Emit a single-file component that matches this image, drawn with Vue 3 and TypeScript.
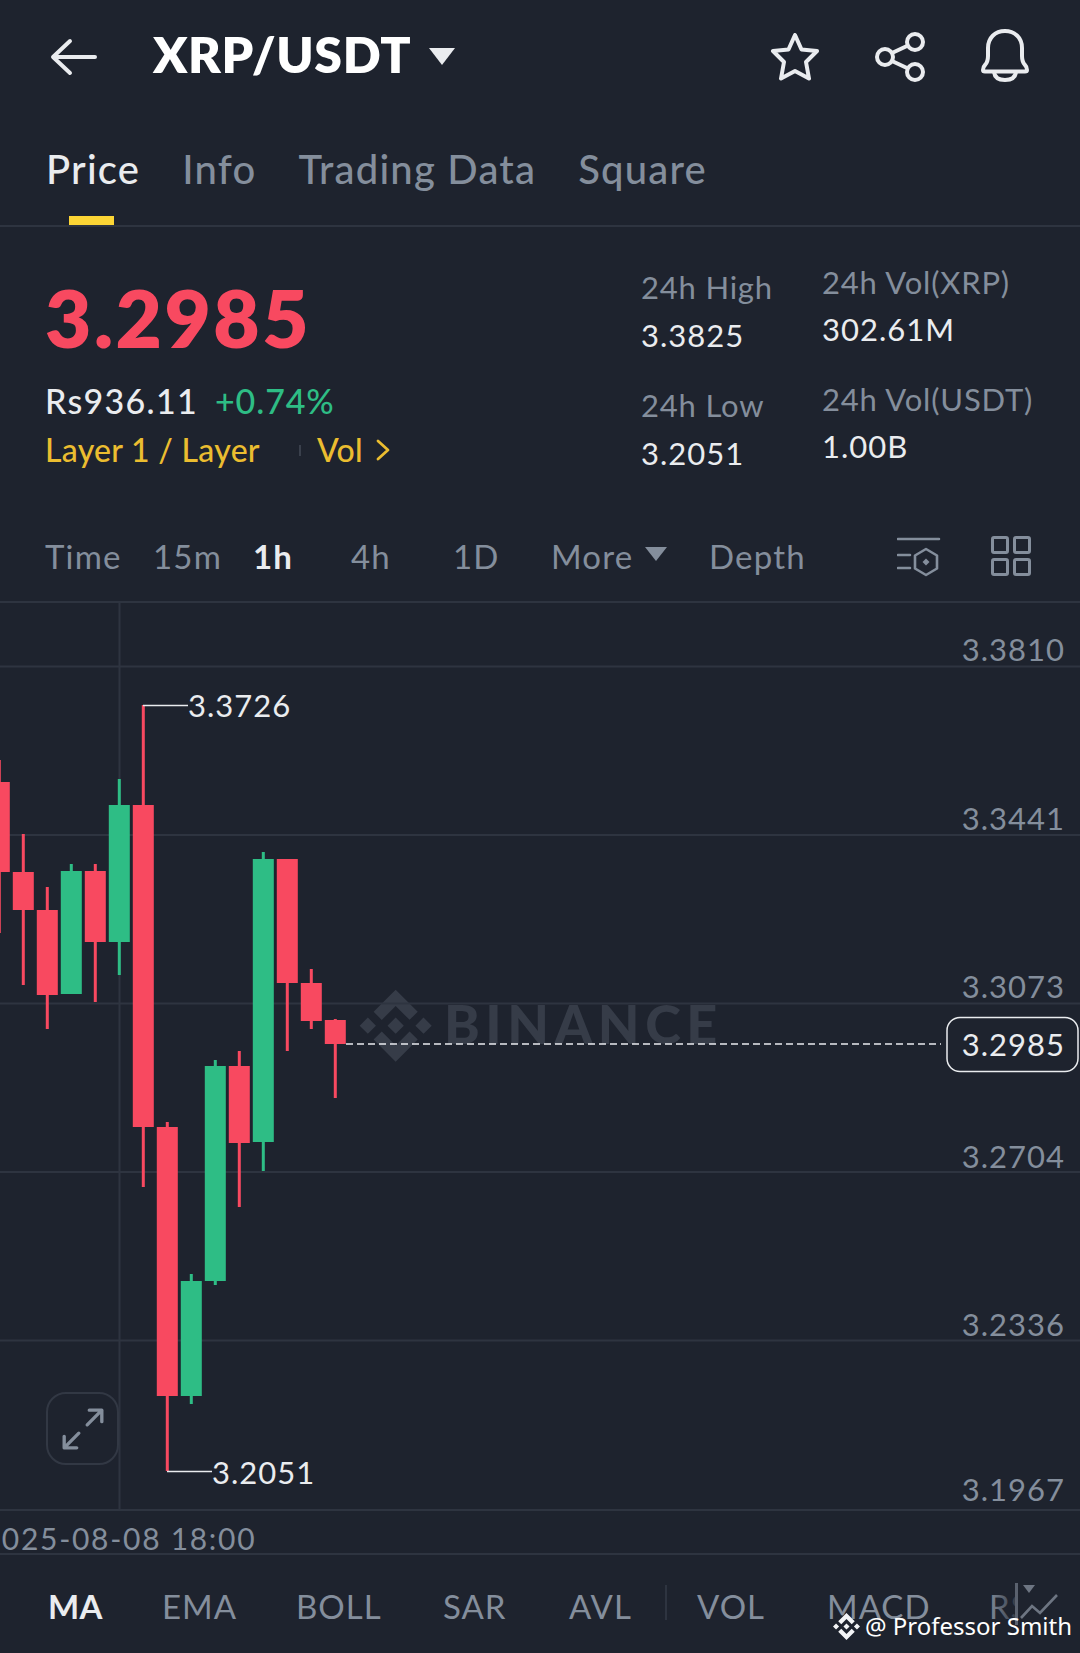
<script setup lang="ts">
interface Candle {
  x: number
  wickTop: number
  wickBottom: number
  top: number
  bottom: number
  up: boolean
}

const tabs = ['Price', 'Info', 'Trading Data', 'Square']
const intervals = ['Time', '15m', '1h', '4h', '1D']
const indicators = ['MA', 'EMA', 'BOLL', 'SAR', 'AVL']
const gridLines = [666.5, 835, 1003.5, 1172, 1340.5, 1510]
const axisLabels = [
  { y: 650, text: '3.3810' },
  { y: 819, text: '3.3441' },
  { y: 987, text: '3.3073' },
  { y: 1157, text: '3.2704' },
  { y: 1325, text: '3.2336' },
  { y: 1490, text: '3.1967' }
]

// x, wick top, wick bottom, body top, body bottom, up
const raw: [number, number, number, number, number, boolean][] = [
  [-0.7, 760, 933, 782, 872, false],
  [23.3, 834, 985, 872, 910, false],
  [47.3, 887, 1029, 910, 995, false],
  [71.3, 864, 994, 871, 994, true],
  [95.3, 864, 1002, 871, 942, false],
  [119.3, 779, 975, 805, 942, true],
  [143.3, 705, 1187, 805, 1127, false],
  [167.3, 1122, 1471, 1127, 1396, false],
  [191.3, 1274, 1404, 1281, 1396, true],
  [215.3, 1060, 1285, 1066, 1281, true],
  [239.3, 1051, 1207, 1066, 1143, false],
  [263.3, 852, 1171, 859, 1142, true],
  [287.3, 859, 1051, 859, 983, false],
  [311.3, 969, 1029, 983, 1021, false],
  [335.3, 1019, 1098, 1020, 1044, false]
]

const candles: Candle[] = raw.map(([x, wickTop, wickBottom, top, bottom, up]) => ({
  x, wickTop, wickBottom, top, bottom, up
}))

const logoPath = 'M16.624 13.9202l2.7175 2.7154-7.353 7.353-7.353-7.352 2.7175-2.7164 4.6355 4.6595 4.6356-4.6595zm4.6366-4.6366L24 12l-2.7154 2.7164L18.5682 12l2.6924-2.7164zm-9.272.001l2.7163 2.6914-2.7164 2.7174v-.001L9.2721 12l2.7164-2.7154zm-9.2722-.001L5.4088 12l-2.6914 2.6924L0 12l2.7164-2.7164zM11.9885.0115l7.353 7.329-2.7174 2.7154-4.6356-4.6356-4.6355 4.6595-2.7174-2.7154 7.353-7.353z'
</script>

<template>
  <div class="page">
    <!-- top bar -->
    <header class="topbar">
      <svg class="back" viewBox="0 0 50 38" fill="none" stroke="currentColor" stroke-width="4" stroke-linecap="round" stroke-linejoin="round">
        <path d="M45 19H4M20 3L3 19l17 16" />
      </svg>
      <h1 class="pair">XRP/USDT</h1>
      <span class="pair-caret"></span>
      <div class="top-actions">
        <svg class="ic-star" viewBox="0 0 50 48" fill="none" stroke="currentColor" stroke-width="4" stroke-linejoin="round">
          <path d="M25 2l6.500 14.500L47 18 36 29l3 16.500L25 38l-14 7.500L14 29 3 18l15.500-1.500z" />
        </svg>
        <svg class="ic-share" viewBox="0 0 50 50" fill="none" stroke="currentColor" stroke-width="4">
          <circle cx="40" cy="10" r="8" />
          <circle cx="10" cy="25" r="8" />
          <circle cx="40" cy="40" r="8" />
          <path d="M17 21l16-7.500M17 29l16 7.500" />
        </svg>
        <svg class="ic-bell" viewBox="0 0 50 54" fill="none" stroke="currentColor" stroke-width="4" stroke-linejoin="round">
          <path d="M3 41q0-3 2-5 3-3 3-9v-8C8 9 15 2 25 2s17 7 17 17v8q0 6 3 9 2 2 2 5 0 1.500-2 1.500H5q-2 0-2-1.500z" />
          <path d="M14 43q1 8 11 8t11-8" />
        </svg>
      </div>
    </header>

    <!-- tabs -->
    <nav class="tabs">
      <span v-for="(tab, i) in tabs" :key="tab" class="tab" :class="{ active: i === 0 }">{{ tab }}</span>
      <span class="tab-bar"></span>
    </nav>

    <!-- price summary -->
    <section class="summary">
      <div class="summary-left">
        <div class="last-price">3.2985</div>
        <div class="fiat-row">
          <span class="fiat">Rs936.11</span>
          <span class="change">+0.74%</span>
        </div>
        <div class="tag-row">
          <span>Layer 1 / Layer</span>
          <i class="tag-sep"></i>
          <span>Vol</span>
          <svg class="tag-chevron" viewBox="0 0 14 22" fill="none" stroke="currentColor" stroke-width="2.800" stroke-linecap="round" stroke-linejoin="round">
            <path d="M2 2l10 9-10 9" />
          </svg>
        </div>
      </div>
      <div class="stats stats-a">
        <div class="stat"><span class="stat-label">24h High</span><span class="stat-value">3.3825</span></div>
        <div class="stat"><span class="stat-label">24h Low</span><span class="stat-value">3.2051</span></div>
      </div>
      <div class="stats stats-b">
        <div class="stat"><span class="stat-label">24h Vol(XRP)</span><span class="stat-value">302.61M</span></div>
        <div class="stat"><span class="stat-label">24h Vol(USDT)</span><span class="stat-value">1.00B</span></div>
      </div>
    </section>

    <!-- interval row -->
    <div class="intervals">
      <span v-for="item in intervals" :key="item" class="interval" :class="{ active: item === '1h' }">{{ item }}</span>
      <span class="interval more">More<i class="more-caret"></i></span>
      <span class="interval">Depth</span>
      <svg class="ic-settings" viewBox="0 0 44 40" fill="none" stroke="currentColor" stroke-width="2.600" stroke-linecap="round" stroke-linejoin="round">
        <path d="M1 2h41M1 18h12M1 31h12" />
        <path d="M29 12l11 6.500v13L29 38l-11-6.500v-13z" />
        <path d="M29 21.500l3.500 3.500-3.500 3.500-3.500-3.500z" fill="currentColor" stroke="none" />
      </svg>
      <svg class="ic-grid" viewBox="0 0 40 40" fill="none" stroke="currentColor" stroke-width="3">
        <rect x="1.500" y="1.500" width="15" height="15" rx="1.500" />
        <rect x="23.500" y="1.500" width="15" height="15" rx="1.500" />
        <rect x="1.500" y="23.500" width="15" height="15" rx="1.500" />
        <rect x="23.500" y="23.500" width="15" height="15" rx="1.500" />
      </svg>
    </div>

    <!-- chart -->
    <div class="chart">
      <svg class="chart-svg" viewBox="0 603 1080 950">
        <!-- watermark -->
        <path :d="logoPath" class="wm-logo" transform="translate(359.700 989.700) scale(3)" />
        <text x="444" y="1044" class="wm-text">BINANCE</text>

        <line v-for="y in gridLines" :key="y" x1="0" x2="1080" :y1="y" :y2="y" class="grid" />
        <line x1="119.500" x2="119.500" y1="603" y2="1510" class="grid" />

        <text v-for="l in axisLabels" :key="l.text" x="1065" :y="l.y + 11" class="axis">{{ l.text }}</text>

        <g v-for="c in candles" :key="c.x" :class="c.up ? 'up' : 'down'">
          <rect :x="c.x - 1.500" :y="c.wickTop" width="3" :height="c.wickBottom - c.wickTop" />
          <rect :x="c.x - 10.500" :y="c.top" width="21" :height="c.bottom - c.top" />
        </g>

        <!-- high / low markers -->
        <path d="M143 705.500h45M167 1471.500h45" class="marker" />
        <text x="188" y="717" class="marker-text">3.3726</text>
        <text x="212" y="1484" class="marker-text">3.2051</text>

        <!-- last price -->
        <line x1="346" x2="941" y1="1044" y2="1044" class="last-line" />
        <rect x="947" y="1017.500" width="131" height="54" rx="13" class="last-box" />
        <text x="1065" y="1056" class="last-text">3.2985</text>

        <text x="119.500" y="1550" class="date">2025-08-08 18:00</text>
      </svg>

      <button class="expand">
        <svg viewBox="0 0 44 44" fill="none" stroke="currentColor" stroke-width="3.200" stroke-linecap="round" stroke-linejoin="round">
          <path d="M26 18L40 4M28 4h12v11M18 26L4 40M16 40H4V29" />
        </svg>
      </button>
    </div>

    <!-- indicators -->
    <div class="indicators">
      <span v-for="(item, i) in indicators" :key="item" class="indicator" :class="{ active: i === 0 }">{{ item }}</span>
      <i class="ind-sep"></i>
      <span class="indicator">VOL</span>
      <span class="indicator">MACD</span>
      <span class="indicator">RSI</span>

      <div class="ind-tools">
        <span class="tools-caret"></span>
        <svg viewBox="0 0 38 30" fill="none" stroke="currentColor" stroke-width="2.600">
          <path d="M1 28l11-12 8 7L37 5" />
        </svg>
      </div>

      <div class="credit">
        <svg viewBox="0 0 24 24"><path :d="logoPath" /></svg>
        <span>@ Professor Smith</span>
      </div>
    </div>
  </div>
</template>

<style scoped>
.page {
  position: relative;
  display: flex;
  flex-direction: column;
  width: 1080px;
  height: 1653px;
  overflow: hidden;
  background: #1e232e;
  color: #eaecef;
  font-family: Lato, "Liberation Sans", sans-serif;
}

/* top bar */
.topbar {
  display: flex;
  align-items: center;
  height: 115px;
  flex: none;
  padding-left: 50px;
}

.back {
  width: 50px;
  height: 38px;
  margin-top: -1px;
  color: #eaecef;
}

.pair {
  margin: 0 0 8px 53px;
  font-size: 50px;
  line-height: 60px;
  font-weight: 800;
  color: #fff;
  letter-spacing: 0.600px;
}

.pair-caret {
  margin: -3px 0 0 18px;
  border-left: 13px solid transparent;
  border-right: 13px solid transparent;
  border-top: 17px solid #eaecef;
}

.top-actions {
  display: flex;
  align-items: center;
  margin-left: auto;
  padding-right: 50px;
}

.ic-star {
  width: 50px;
  height: 48px;
  margin-top: -1px;
}

.ic-share {
  width: 50px;
  height: 50px;
  margin: -1px 0 0 55px;
}

.ic-bell {
  width: 50px;
  height: 54px;
  margin: -4px 0 0 55px;
}

/* tabs */
.tabs {
  position: relative;
  display: flex;
  gap: 42px;
  height: 112px;
  flex: none;
  padding: 32px 0 0 46px;
  box-sizing: border-box;
  border-bottom: 2px solid #2e3440;
}

.tab {
  font-size: 40px;
  line-height: 44px;
  color: #848e9c;
  font-weight: 500;
  letter-spacing: 1.200px;
}

.tab.active {
  color: #eaecef;
}

.tab-bar {
  position: absolute;
  left: 69px;
  bottom: 0;
  width: 45px;
  height: 9px;
  background: #fcd535;
}

/* summary */
.summary {
  display: flex;
  height: 283px;
  flex: none;
}

.summary-left {
  width: 641px;
  flex: none;
  padding: 50px 0 0 45px;
  box-sizing: border-box;
}

.last-price {
  font-size: 80px;
  line-height: 80px;
  font-weight: 800;
  letter-spacing: 2.500px;
  color: #f84960;
}

.fiat-row {
  display: flex;
  gap: 17px;
  margin-top: 24px;
  font-size: 34px;
  line-height: 40px;
  font-weight: 500;
}

.fiat {
  letter-spacing: 1.300px;
}

.change {
  color: #2ebd85;
  letter-spacing: 0.900px;
}

.tag-row {
  display: flex;
  align-items: center;
  margin-top: 11px;
  font-size: 32px;
  line-height: 36px;
  font-weight: 500;
  letter-spacing: 0.300px;
  color: #ebbd30;
}

.tag-sep {
  width: 2px;
  height: 11px;
  margin: 0 16px 0 39px;
  background: #3a404c;
}

.tag-chevron {
  width: 14px;
  height: 22px;
  margin-left: 13px;
}

.stats {
  display: flex;
  flex-direction: column;
  gap: 30px;
}

.stats-a {
  width: 181px;
  flex: none;
  padding-top: 40px;
}

.stats-b {
  padding-top: 35px;
}

.stat {
  display: flex;
  flex-direction: column;
  gap: 8px;
  white-space: nowrap;
}

.stats-b .stat {
  gap: 7px;
}

.stat-label {
  font-size: 31px;
  line-height: 40px;
  color: #848e9c;
  letter-spacing: 0.800px;
}

.stat-value {
  font-size: 31px;
  line-height: 40px;
  color: #eaecef;
  letter-spacing: 1px;
}

/* intervals */
.intervals {
  position: relative;
  display: grid;
  grid-template-columns: 108px 100px 98px 102px 98px 158px auto;
  align-items: center;
  height: 93px;
  flex: none;
  padding-left: 45px;
  box-sizing: border-box;
  border-bottom: 2px solid #2e3440;
}

.interval {
  font-size: 33px;
  line-height: 40px;
  color: #848e9c;
  letter-spacing: 1.200px;
}

.interval.active {
  color: #eaecef;
  font-weight: 700;
}

.more {
  display: flex;
  align-items: center;
}

.more-caret {
  margin: 0 0 4px 12px;
  border-left: 11px solid transparent;
  border-right: 11px solid transparent;
  border-top: 14px solid #848e9c;
}

.ic-settings {
  position: absolute;
  left: 897px;
  top: 27px;
  width: 44px;
  height: 40px;
  color: #848e9c;
}

.ic-grid {
  position: absolute;
  left: 991px;
  top: 26px;
  width: 40px;
  height: 40px;
  color: #848e9c;
}

/* chart */
.chart {
  position: relative;
  height: 950px;
  flex: none;
}

.chart-svg {
  display: block;
  width: 1080px;
  height: 950px;
}

.grid {
  stroke: #2e3440;
  stroke-width: 2;
}

.axis {
  font-size: 31px;
  fill: #848e9c;
  text-anchor: end;
  letter-spacing: 1px;
}

.up rect {
  fill: #2ebd85;
}

.down rect {
  fill: #f84960;
}

.marker {
  fill: none;
  stroke: #eaecef;
  stroke-width: 1.500;
}

.marker-text {
  font-size: 31px;
  fill: #eaecef;
  letter-spacing: 1px;
}

.last-line {
  stroke: #eaecef;
  stroke-width: 1.500;
  stroke-dasharray: 7 4;
}

.last-box {
  fill: #1e232e;
  stroke: #eaecef;
  stroke-width: 1.500;
}

.last-text {
  font-size: 31px;
  fill: #eaecef;
  text-anchor: end;
  letter-spacing: 1px;
}

.date {
  font-size: 30px;
  fill: #848e9c;
  text-anchor: middle;
  letter-spacing: 1.700px;
}

.wm-logo {
  fill: #363c48;
}

.wm-text {
  font-size: 54px;
  font-weight: 900;
  fill: #363c48;
  letter-spacing: 5.500px;
}

.expand {
  position: absolute;
  left: 46px;
  top: 789px;
  display: flex;
  align-items: center;
  justify-content: center;
  width: 73px;
  height: 73px;
  padding: 0;
  background: transparent;
  border: 2px solid #323844;
  border-radius: 20px;
  color: #848e9c;
}

.expand svg {
  width: 46px;
  height: 46px;
}

/* indicators */
.indicators {
  position: relative;
  display: grid;
  grid-template-columns: 114px 134px 147px 126px 96px 32px 130px 162px 60px;
  align-items: center;
  height: 98px;
  flex: none;
  padding: 6px 0 0 48px;
  box-sizing: border-box;
  border-top: 2px solid #2e3440;
  white-space: nowrap;
}

.indicator {
  font-size: 33px;
  line-height: 40px;
  color: #848e9c;
  letter-spacing: 1px;
}

.indicator.active {
  color: #eaecef;
  font-weight: 700;
  letter-spacing: 0.300px;
}

.ind-sep {
  width: 2px;
  height: 35px;
  margin-top: -8px;
  background: #2e3440;
}

.ind-tools {
  position: absolute;
  left: 1015px;
  top: 28px;
  width: 65px;
  height: 42px;
  background: #1e232e;
  border-left: 3px solid #5a616e;
  box-sizing: border-box;
  color: #6d7582;
}

.ind-tools::before {
  content: '';
  position: absolute;
  left: -30px;
  top: 0;
  width: 27px;
  height: 42px;
  background: linear-gradient(90deg, rgba(30, 35, 46, 0), rgba(30, 35, 46, 0.75));
}

.tools-caret {
  position: absolute;
  left: 5px;
  top: 2px;
  border-left: 6px solid transparent;
  border-right: 6px solid transparent;
  border-top: 8px solid #6d7582;
}

.ind-tools svg {
  position: absolute;
  left: 2px;
  top: 7px;
  width: 38px;
  height: 30px;
}

.credit {
  position: absolute;
  left: 833px;
  top: 57px;
  display: flex;
  align-items: center;
  gap: 5px;
  color: #fff;
  font-family: "Noto Sans", sans-serif;
  font-size: 24px;
  line-height: 28px;
  white-space: nowrap;
}

.credit svg {
  width: 27px;
  height: 27px;
  fill: #f3f4f6;
}
</style>
